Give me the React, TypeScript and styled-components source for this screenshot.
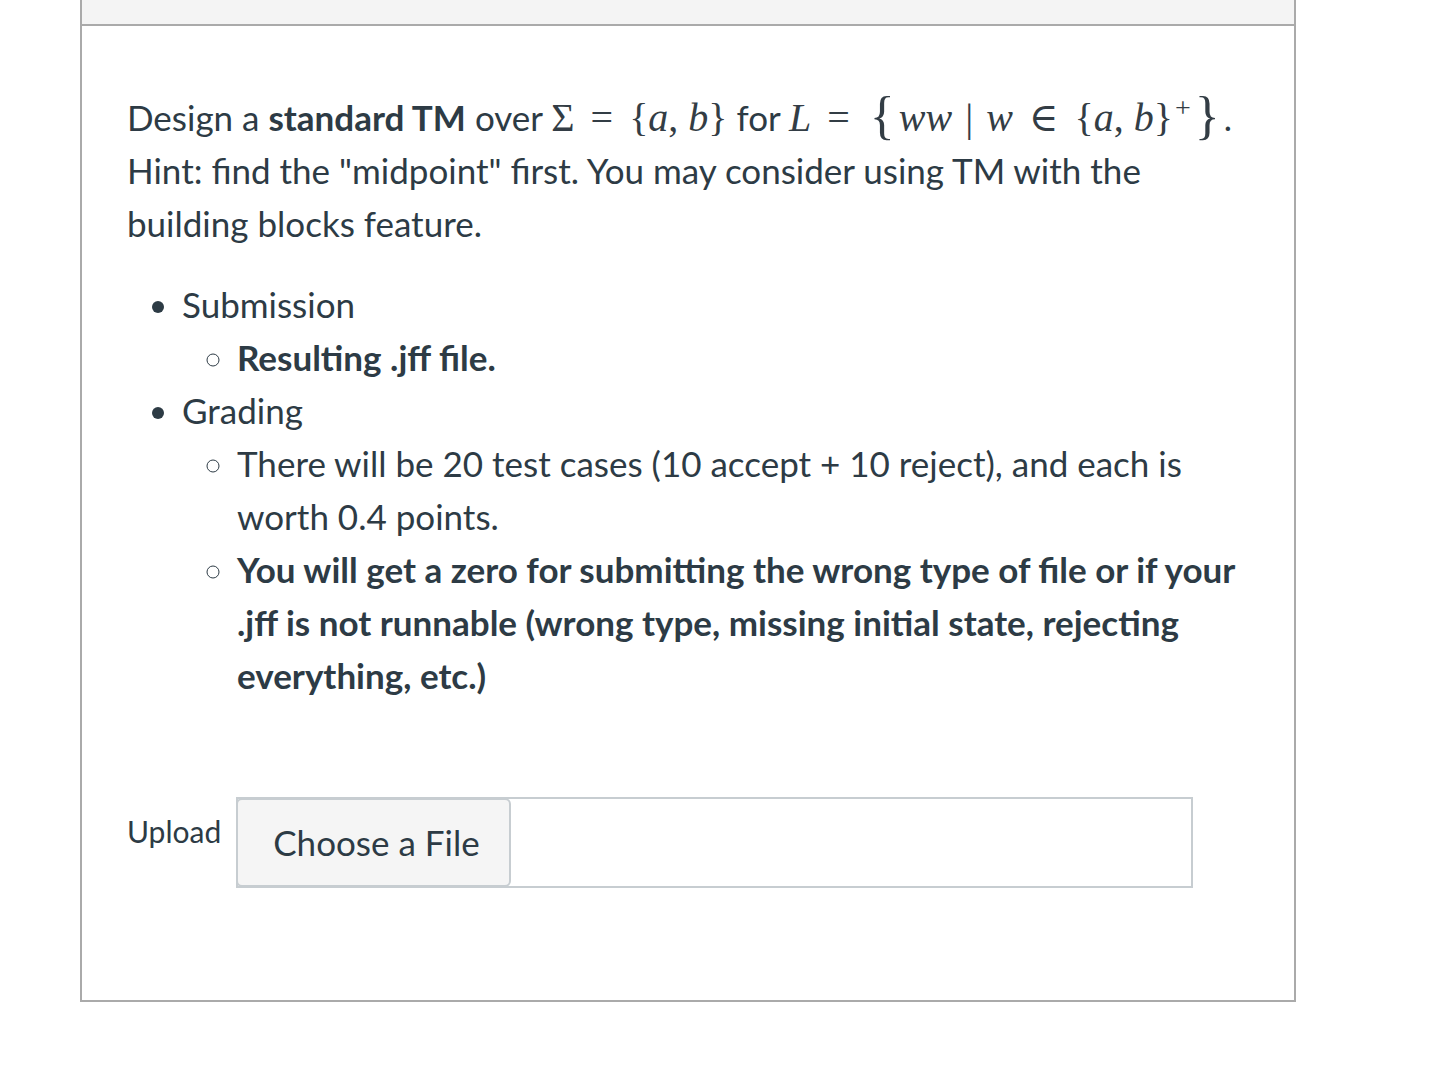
import styled, { createGlobalStyle } from "styled-components"

const GlobalStyle = createGlobalStyle`
    html, body {
        margin: 0;
        padding: 0;
        background: #ffffff;
    }
    body {
        font-family: Lato, "Noto Sans", "Liberation Sans", sans-serif;
        color: #2d3b45;
    }
`

export default function App(){
    return(
        <Page>
            <GlobalStyle/>
            <Frame>
                <TopStrip/>
                <Body>
                    <Prompt>
                        <FirstLine>
                            Design a <b>standard TM</b> over{" "}
                            <Math>Σ <Op>=</Op> {"{"}<I>a</I>, <I>b</I>{"}"}</Math>{" "}
                            for{" "}
                            <Math>
                                <I>L</I> <Op>=</Op> <Brace>{"{"}</Brace><I>ww</I> <Bar>|</Bar> <I>w</I> <Op>∈</Op> {"{"}<I>a</I>, <I>b</I>{"}"}<Sup>+</Sup><Brace>{"}"}</Brace>
                            </Math>.
                        </FirstLine>
                        <br/>
                        Hint: find the "midpoint" first. You may consider using TM with the building blocks feature.
                    </Prompt>
                    <List>
                        <li>
                            Submission
                            <SubList>
                                <li><b>Resulting .jff file.</b></li>
                            </SubList>
                        </li>
                        <li>
                            Grading
                            <SubList>
                                <li>There will be 20 test cases (10 accept + 10 reject), and each is worth 0.4 points.</li>
                                <li><b>You will get a zero for submitting the wrong type of file or if your .jff is not runnable (wrong type, missing initial state, rejecting everything, etc.)</b></li>
                            </SubList>
                        </li>
                    </List>
                    <UploadRow>
                        <UploadLabel>Upload</UploadLabel>
                        <FileField>
                            <ChooseButton>Choose a File</ChooseButton>
                        </FileField>
                    </UploadRow>
                </Body>
            </Frame>
        </Page>
    )
}

const Page = styled.div`
    padding-left: 80px;
    width: 1216px;
`

const Frame = styled.div`
    border: 2px solid #aaaaaa;
    border-top: none;
`

const TopStrip = styled.div`
    height: 24px;
    background-color: #f4f4f4;
    border-bottom: 2px solid #aaaaaa;
`

const Body = styled.div`
    padding: 61px 45px 112px 45px;
    font-size: 35px;
    line-height: 53px;
`

const Prompt = styled.p`
    margin: 0;
    padding-bottom: 2px;

    b{
        font-weight: 700;
    }
`

const FirstLine = styled.span`
    white-space: nowrap;
`

const Math = styled.span`
    font-family: "Liberation Serif", "DejaVu Serif", serif;
    font-size: 40px;
    white-space: nowrap;
    color: #333d45;
`

const I = styled.i`
    font-style: italic;
`

const Op = styled.span`
    padding: 0 6px;
`

const Brace = styled.span`
    font-size: 52px;
    display: inline-block;
    transform: translateY(2px);
    padding: 0 4px;
`

const Bar = styled.span`
    padding: 0 3px;
    font-weight: 300;
`

const Sup = styled.sup`
    font-size: 28px;
    line-height: 0;
    vertical-align: 14px;
    padding-left: 2px;
`

const List = styled.ul`
    margin: 26px 0 0 0;
    padding-left: 55px;
    list-style: disc;

    b{
        font-weight: 700;
    }
`

const SubList = styled.ul`
    margin: 0;
    padding-left: 55px;
    list-style: circle;
`

const UploadRow = styled.div`
    margin-top: 95px;
    display: flex;
    align-items: flex-start;
    gap: 15px;
`

const UploadLabel = styled.div`
    padding-top: 16px;
    font-size: 30px;
    line-height: 36px;
`

const FileField = styled.div`
    width: 957px;
    height: 91px;
    box-sizing: border-box;
    border: 2px solid #c7cdd1;
    display: flex;
`

const ChooseButton = styled.div`
    margin: -1px 0 0 -2px;
    width: 275px;
    height: 89px;
    box-sizing: border-box;
    border: 2px solid #c7cdd1;
    border-radius: 6px;
    background-color: #f5f5f5;
    display: flex;
    align-items: center;
    padding-left: 35px;
    font-size: 35px;
    color: #2d3b45;
`
